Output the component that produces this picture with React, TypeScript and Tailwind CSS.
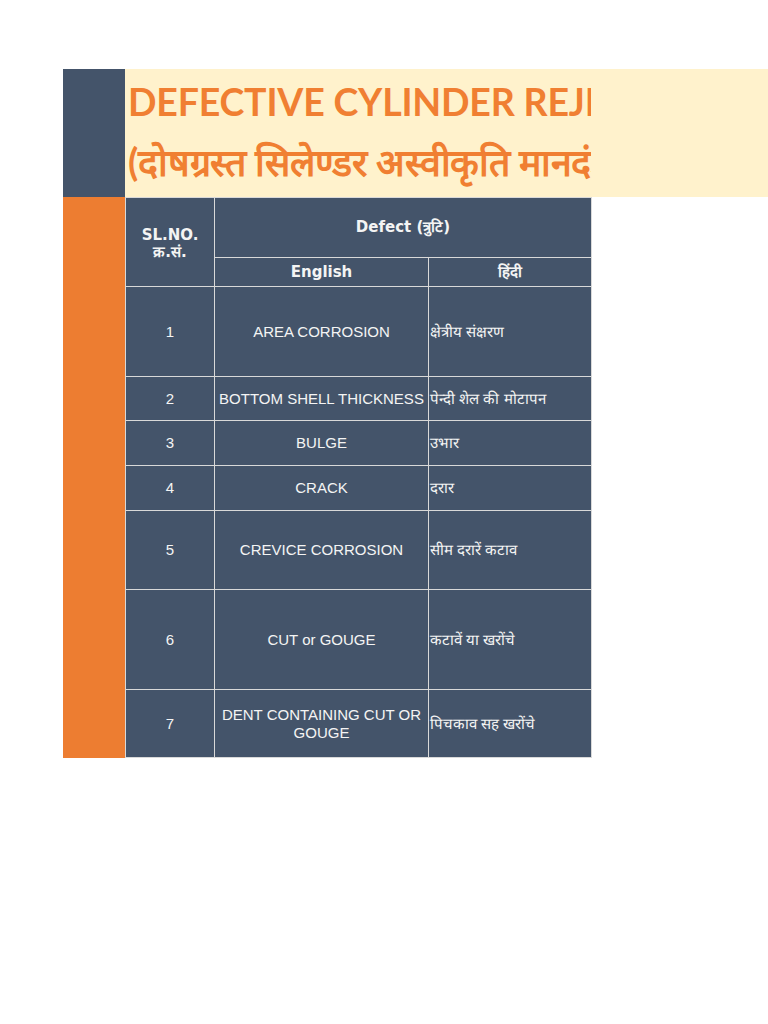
const rows = [
  { no: "1", en: ["AREA CORROSION"], hi: "क्षेत्रीय संक्षरण", h: "h-[90px]" },
  { no: "2", en: ["BOTTOM SHELL THICKNESS"], hi: "पेन्दी शेल की मोटापन", h: "h-[44px]" },
  { no: "3", en: ["BULGE"], hi: "उभार", h: "h-[45px]" },
  { no: "4", en: ["CRACK"], hi: "दरार", h: "h-[45px]" },
  { no: "5", en: ["CREVICE CORROSION"], hi: "सीम दरारें कटाव", h: "h-[79px]" },
  { no: "6", en: ["CUT or GOUGE"], hi: "कटावें या खरोंचे", h: "h-[100px]" },
  { no: "7", en: ["DENT CONTAINING CUT OR", "GOUGE"], hi: "पिचकाव सह खरोंचे", h: "h-[68px]" },
];

const cell = "border border-[#d9d9d9] p-0 align-middle";

export default function App() {
  return (
    <div className="min-h-[1024px] bg-white pt-[69px] pl-[63px]">
      <div className="grid grid-cols-[62px_1fr]">
        {/* title band */}
        <div className="h-[128px] bg-[#44546a]" />
        <div className="h-[128px] bg-[#fff2cc]">
          <div className="w-[466px] h-full overflow-hidden whitespace-nowrap pl-[3px] pt-[3px] text-[#f07f32] font-['Lato',sans-serif] font-bold text-[37.5px] leading-[60px] tracking-[-0.2px]">
            <div>DEFECTIVE CYLINDER REJECTION CRITERIA</div>
            <div>(दोषग्रस्त सिलेण्डर अस्वीकृति मानदंड)</div>
          </div>
        </div>

        {/* table band */}
        <div className="bg-[#ed7d31]" />
        <div>
          <table className="border-collapse table-fixed w-[466px] bg-[#44546a] text-[#f4f4f4]">
            <colgroup>
              <col className="w-[89px]" />
              <col className="w-[214px]" />
              <col className="w-[163px]" />
            </colgroup>
            <thead className="font-['DejaVu_Sans',sans-serif] font-bold text-[15px] leading-[17px]">
              <tr className="h-[60px]">
                <th rowSpan={2} className={cell + " text-center pt-[3px]"}>
                  <div>SL.NO.</div>
                  <div>क्र.सं.</div>
                </th>
                <th colSpan={2} className={cell + " text-center"}>
                  Defect (त्रुटि)
                </th>
              </tr>
              <tr className="h-[29px]">
                <th className={cell + " text-center"}>English</th>
                <th className={cell + " text-center"}>हिंदी</th>
              </tr>
            </thead>
            <tbody className="font-['Liberation_Sans',sans-serif] text-[15px] leading-[18px]">
              {rows.map((r) => (
                <tr key={r.no} className={r.h}>
                  <td className={cell + " text-center"}>{r.no}</td>
                  <td className={cell + " text-center px-[2px]"}>
                    {r.en.map((l) => (
                      <div key={l}>{l}</div>
                    ))}
                  </td>
                  <td className={cell + " text-left pl-[1px] whitespace-nowrap overflow-hidden"}>
                    {r.hi}
                  </td>
                </tr>
              ))}
            </tbody>
          </table>
        </div>
      </div>
    </div>
  );
}
